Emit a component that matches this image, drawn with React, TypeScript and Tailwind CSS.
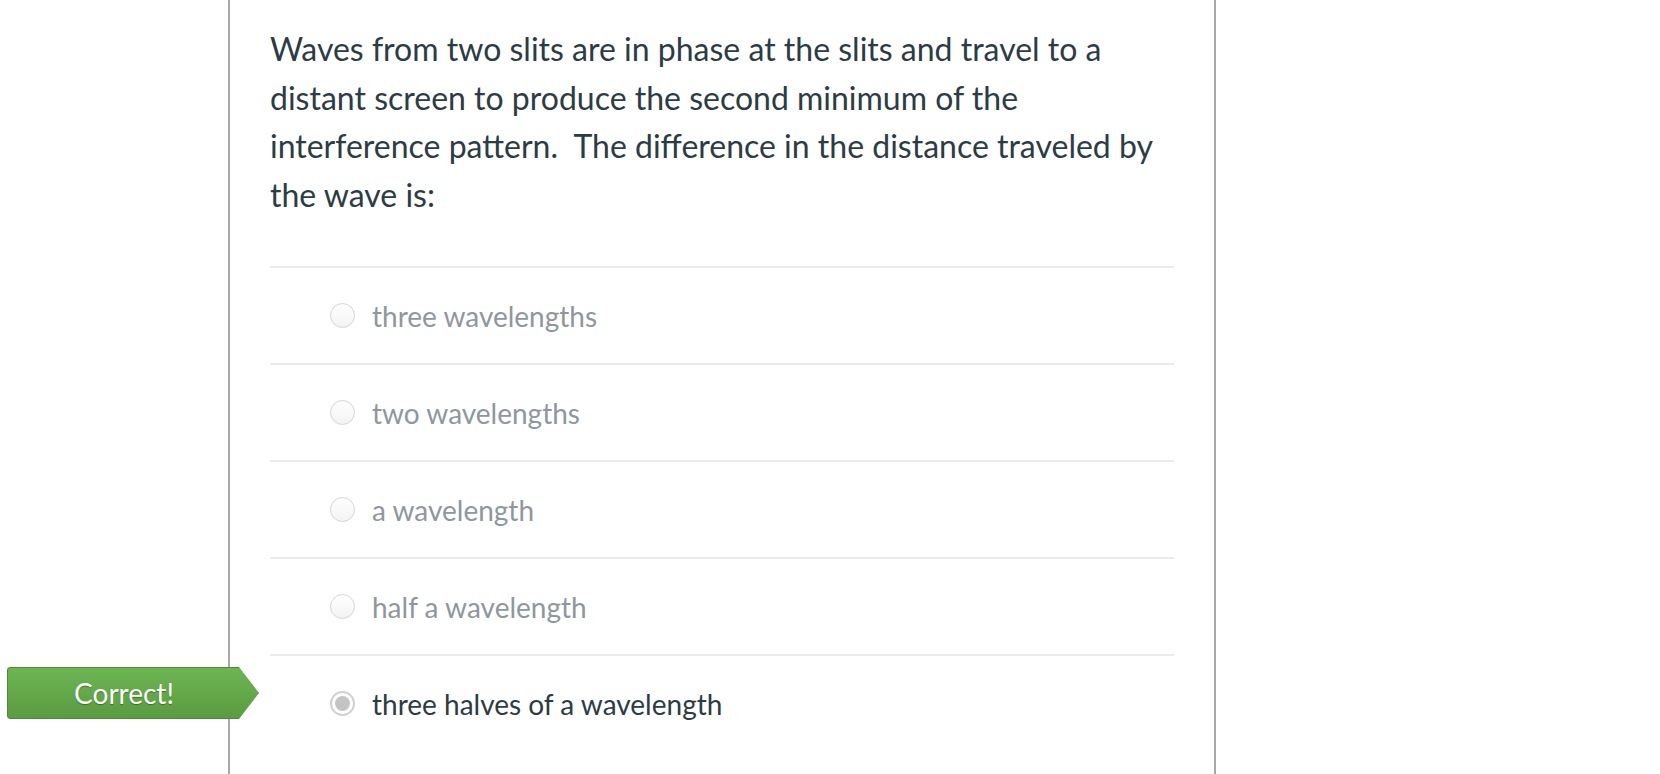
const options = [
  { label: "three wavelengths", selected: false },
  { label: "two wavelengths", selected: false },
  { label: "a wavelength", selected: false },
  { label: "half a wavelength", selected: false },
  { label: "three halves of a wavelength", selected: true },
];

function Radio({ selected }: { selected: boolean }) {
  if (selected) {
    return (
      <span className="flex h-[25px] w-[25px] shrink-0 items-center justify-center rounded-full border-2 border-[#d0d0d0] bg-white">
        <span className="h-[15px] w-[15px] rounded-full bg-[#c4c4c4]" />
      </span>
    );
  }
  return <span className="h-[25px] w-[25px] shrink-0 rounded-full border-[1.5px] border-[#d6d6d6] bg-gradient-to-b from-white to-[#f3f3f3]" />;
}

export default function App() {
  return (
    <div className="relative h-[774px] w-[1660px] overflow-hidden bg-white font-['Lato',sans-serif]">
      <div className="ml-[228px] h-full w-[988px] border-x-2 border-[#a9a9a9] px-10">
        <p className="pt-[25px] text-[32px] leading-[48.5px] text-[#2d3b45]">
          Waves from two slits are in phase at the slits and travel to a<br />
          distant screen to produce the second minimum of the<br />
          interference pattern.&nbsp; The difference in the distance traveled by<br />
          the wave is:
        </p>
        <div className="mt-[47px]">
          {options.map((o) => (
            <div className="flex h-[97px] items-center gap-[17px] border-t-2 border-[#ebebeb] pl-[60px]" key={o.label}>
              <Radio selected={o.selected} />
              <span className={`text-[28px] ${o.selected ? "text-[#2d3b45]" : "text-[#8f979e]"}`}>{o.label}</span>
            </div>
          ))}
        </div>
      </div>

      <div className="absolute left-[7px] top-[667px] h-[52px] w-[252px] [clip-path:polygon(0_0,232px_0,252px_50%,232px_100%,0_100%)]">
        <div className="flex h-full w-full items-center rounded-[3px] border border-[#4e8a38] bg-gradient-to-b from-[#6db553] to-[#5a9c41]">
          <span className="w-[232px] text-center text-[28px] text-white [text-shadow:0_1px_1px_rgba(0,0,0,0.35)]">Correct!</span>
        </div>
      </div>
    </div>
  );
}
